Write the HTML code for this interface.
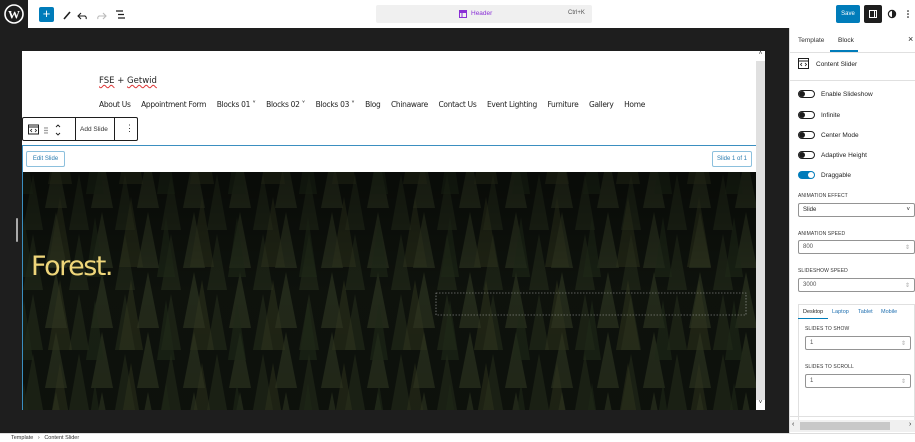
<!DOCTYPE html>
<html><head><meta charset="utf-8"><style>
*{margin:0;padding:0;box-sizing:border-box}
body{width:915px;height:442px;overflow:hidden;font-family:"Liberation Sans",sans-serif;background:#fff;position:relative;color:#1e1e1e}
.abs{position:absolute}
.top{left:0;top:0;width:915px;height:28px;background:#fff}
.wp{left:0;top:0;width:28px;height:28px;background:#1e1e1e}
.canvas{left:0;top:28px;width:789px;height:405px;background:#1e1e1e}
.side{left:789px;top:28px;width:126px;height:405px;background:#fff;border-left:1px solid #ddd;font-size:6.5px}
.frame{left:22px;top:51px;width:743px;height:359px;background:#fff}
.nav span{margin-right:10.5px}
.tog{position:absolute;left:8px;width:17px;height:8px;border:1px solid #1e1e1e;border-radius:5px}
.tog:after{content:"";position:absolute;left:0px;top:0px;width:6px;height:6px;border-radius:50%;background:#1e1e1e}
.tl{position:absolute;left:31px;font-size:6.5px;color:#1e1e1e}
.lab{position:absolute;left:8px;font-size:5px;color:#333;letter-spacing:.1px}
.inp{position:absolute;left:8px;width:117px;height:14px;border:1px solid #949494;font-size:6px;padding:3px 4px;border-radius:2px}
</style></head><body>
<div class="abs top"></div>
<div class="abs wp"><svg width="28" height="28"><circle cx="14" cy="14" r="9" fill="none" stroke="#fff" stroke-width="1.6"/><text x="14" y="18.5" text-anchor="middle" font-family="Liberation Serif" font-weight="bold" font-size="12" fill="#fff">W</text></svg></div>
<div class="abs" style="left:39px;top:7px;width:15px;height:15px;background:#007cba;border-radius:2px;color:#fff;font-size:13px;line-height:14px;text-align:center">+</div>
<svg class="abs" style="left:61px;top:8px" width="70" height="13"><path d="M3 11 L9 4" stroke="#1e1e1e" stroke-width="1.6"/><path d="M20 5 l-3 3 3 3 M17 8 h6 a2 2 0 0 1 2 3" stroke="#1e1e1e" fill="none" stroke-width="1.1"/><path d="M42 5 l3 3 -3 3 M45 8 h-6 a2 2 0 0 0 -2 3" stroke="#bbb" fill="none" stroke-width="1.1"/><path d="M55 3h7 M57 6.5h6 M57 10h7" stroke="#1e1e1e" stroke-width="1.2"/></svg>
<div class="abs" style="left:376px;top:5px;width:216px;height:18px;background:#f0f0f0;border-radius:2px"></div>
<svg class="abs" style="left:459px;top:10px" width="8" height="8"><rect x=".5" y=".5" width="7" height="7" fill="none" stroke="#8a2fd6"/><rect x=".5" y=".5" width="7" height="2.5" fill="#8a2fd6"/><line x1="3" y1="3" x2="3" y2="8" stroke="#8a2fd6"/></svg>
<div class="abs" style="left:471px;top:10px;font-size:6.5px;color:#8a2fd6">Header</div>
<div class="abs" style="left:568px;top:10px;font-size:6px;color:#555">Ctrl+K</div>
<div class="abs" style="left:836px;top:5px;width:24px;height:18px;background:#007cba;color:#fff;font-size:6px;text-align:center;line-height:18px;border-radius:2px">Save</div>
<div class="abs" style="left:864px;top:5px;width:18px;height:18px;background:#1e1e1e;border-radius:2px"><div style="margin:5px;width:8px;height:8px;border:1px solid #fff;position:relative"><div style="position:absolute;right:1px;top:0;width:1.5px;height:6px;background:#fff"></div></div></div>
<svg class="abs" style="left:887px;top:9px" width="28" height="10"><circle cx="5" cy="5" r="3.6" fill="none" stroke="#1e1e1e" stroke-width="1.2"/><path d="M5 1.4 a3.6 3.6 0 0 1 0 7.2z" fill="#1e1e1e"/><circle cx="21" cy="2" r=".8"/><circle cx="21" cy="5" r=".8"/><circle cx="21" cy="8" r=".8"/></svg>

<div class="abs canvas"></div>
<div class="abs" style="left:16px;top:218px;width:2px;height:24px;background:#aaa;border-radius:1px"></div>
<div class="abs frame">
 <div class="abs" style="left:77px;top:25px;font-size:8.5px;color:#222;font-family:'DejaVu Sans',sans-serif"><span style="text-decoration:underline wavy #d33;text-decoration-thickness:1px">FSE</span> + <span style="text-decoration:underline wavy #d33;text-decoration-thickness:1px">Getwid</span></div>
 <div class="abs nav" style="left:77px;top:49px;font-size:7.5px;color:#222;font-family:'DejaVu Sans',sans-serif;white-space:nowrap;letter-spacing:-.3px"><span>About Us</span><span>Appointment Form</span><span>Blocks 01 ˅</span><span>Blocks 02 ˅</span><span>Blocks 03 ˅</span><span>Blog</span><span>Chinaware</span><span>Contact Us</span><span>Event Lighting</span><span>Furniture</span><span>Gallery</span><span>Home</span></div>
 <div class="abs" style="left:0;top:66px;width:116px;height:24px;border:1px solid #1e1e1e;background:#fff;border-radius:2px">
  <div class="abs" style="left:52px;top:-1px;width:1px;height:24px;background:#1e1e1e"></div>
  <div class="abs" style="left:91px;top:-1px;width:1px;height:24px;background:#1e1e1e"></div>
  <svg class="abs" style="left:5px;top:6px" width="40" height="12"><rect x=".5" y="1" width="10" height="9" fill="none" stroke="#1e1e1e"/><line x1=".5" y1="3" x2="10.5" y2="3" stroke="#1e1e1e"/><path d="M4 5 l-1.5 1.5 1.5 1.5 M7 5 l1.5 1.5 -1.5 1.5" stroke="#1e1e1e" fill="none" stroke-width=".8"/><g fill="#666"><circle cx="17" cy="4" r=".7"/><circle cx="19" cy="4" r=".7"/><circle cx="17" cy="6.5" r=".7"/><circle cx="19" cy="6.5" r=".7"/><circle cx="17" cy="9" r=".7"/><circle cx="19" cy="9" r=".7"/></g><path d="M28 3 l2 -2 2 2 M28 9 l2 2 2 -2" stroke="#1e1e1e" fill="none" stroke-width=".9"/></svg>
  <div class="abs" style="left:57px;top:8px;font-size:6.5px;color:#333">Add Slide</div>
  <div class="abs" style="left:102px;top:5px;font-size:9px;color:#333">⋮</div>
 </div>
 <div class="abs" style="left:0;top:94px;width:735px;height:265px;border:1px solid #3b8fc0;border-bottom:none"></div>
 <div class="abs" style="left:4px;top:100px;width:39px;height:16px;border:1px solid #8cc0dd;border-radius:2px;font-size:6px;color:#2b7cb0;text-align:center;line-height:14px">Edit Slide</div>
 <div class="abs" style="left:690px;top:100px;width:40px;height:16px;border:1px solid #8cc0dd;border-radius:2px;font-size:6px;color:#2b7cb0;text-align:center;line-height:14px">Slide 1 of 1</div>
 <svg class="abs" style="left:1px;top:121px" width="733" height="238">
  <defs>
   <pattern id="t" width="46" height="60" patternUnits="userSpaceOnUse">
    <rect width="46" height="60" fill="#11160f"/>
    <path d="M10 2 L20 58 L0 58Z" fill="#222a1a"/>
    <path d="M33 -20 L44 36 L22 36Z" fill="#2b3320"/>
    <path d="M33 40 L44 96 L22 96Z" fill="#2b3320"/>
   </pattern>
   <pattern id="t2" x="17" y="25" width="71" height="83" patternUnits="userSpaceOnUse">
    <path d="M20 0 L32 70 L8 70Z" fill="#3e4426" opacity=".5"/>
    <path d="M55 20 L64 80 L46 80Z" fill="#26331e" opacity=".6"/>
   </pattern>
   <linearGradient id="g" x1="0" y1="0" x2="0" y2="1"><stop offset="0" stop-color="#000" stop-opacity=".5"/><stop offset=".5" stop-color="#000" stop-opacity=".2"/><stop offset="1" stop-color="#000" stop-opacity=".25"/></linearGradient>
  </defs>
  <rect width="733" height="238" fill="url(#t)"/>
  <rect width="733" height="238" fill="url(#t2)"/>
  <rect width="733" height="238" fill="url(#g)"/>
  <rect x="413" y="121" width="310" height="22" fill="none" stroke="#aaa" stroke-dasharray="1.5 1.5" stroke-width=".6"/>
  <text x="8" y="103" font-family="'DejaVu Sans',sans-serif" font-size="27" fill="#efd67a" letter-spacing="-1.5">Forest.</text>
 </svg>
 <div class="abs" style="left:734px;top:0;width:9px;height:359px;background:#e0e0e0"></div>
 <div class="abs" style="left:734px;top:0;width:9px;height:10px;background:#fff;font-size:6px;text-align:center">˄</div>
 <div class="abs" style="left:734px;top:349px;width:9px;height:10px;background:#fff;font-size:6px;text-align:center">˅</div>
</div>

<div class="abs side">
 <div class="abs" style="left:8px;top:9px;color:#333">Template</div>
 <div class="abs" style="left:48px;top:9px;color:#1e1e1e">Block</div>
 <div class="abs" style="left:40px;top:22px;width:28px;height:2px;background:#007cba"></div>
 <div class="abs" style="left:118px;top:6px;font-size:9px">×</div>
 <div class="abs" style="left:0;top:24px;width:126px;height:1px;background:#e0e0e0"></div>
 <svg class="abs" style="left:8px;top:30px" width="12" height="12"><rect x=".5" y=".5" width="10" height="10" fill="none" stroke="#1e1e1e"/><line x1=".5" y1="3" x2="10.5" y2="3" stroke="#1e1e1e"/><path d="M4 5 l-1.5 1.5 1.5 1.5 M7 5 l1.5 1.5 -1.5 1.5" stroke="#1e1e1e" fill="none" stroke-width=".8"/></svg>
 <div class="abs" style="left:26px;top:33px">Content Slider</div>
 <div class="abs" style="left:0;top:52px;width:126px;height:1px;background:#e0e0e0"></div>
 <div class="tog" style="top:62px"></div><div class="tl" style="top:63px">Enable Slideshow</div>
 <div class="tog" style="top:83px"></div><div class="tl" style="top:84px">Infinite</div>
 <div class="tog" style="top:103px"></div><div class="tl" style="top:104px">Center Mode</div>
 <div class="tog" style="top:123px"></div><div class="tl" style="top:124px">Adaptive Height</div>
 <div class="abs" style="left:8px;top:143px;width:17px;height:8px;border-radius:5px;background:#007cba"></div><div class="abs" style="left:18px;top:144px;width:6px;height:6px;border-radius:50%;background:#fff"></div><div class="tl" style="top:144px">Draggable</div>
 <div class="lab" style="top:165px">ANIMATION EFFECT</div>
 <div class="inp" style="top:175px">Slide<span style="float:right">˅</span></div>
 <div class="lab" style="top:203px">ANIMATION SPEED</div>
 <div class="inp" style="top:212px;color:#555">800<span style="float:right;color:#aaa">⇕</span></div>
 <div class="lab" style="top:240px">SLIDESHOW SPEED</div>
 <div class="inp" style="top:250px;color:#555">3000<span style="float:right;color:#aaa">⇕</span></div>
 <div class="abs" style="left:8px;top:276px;width:117px;height:123px;border:1px solid #e0e0e0"></div>
 <div class="abs" style="left:13px;top:281px;font-size:5.5px;color:#1e1e1e">Desktop</div>
 <div class="abs" style="left:8px;top:290px;width:30px;height:1px;background:#007cba"></div>
 <div class="abs" style="left:42px;top:281px;font-size:5.5px;color:#2271b1">Laptop</div>
 <div class="abs" style="left:68px;top:281px;font-size:5.5px;color:#2271b1">Tablet</div>
 <div class="abs" style="left:91px;top:281px;font-size:5.5px;color:#2271b1">Mobile</div>
 <div class="lab" style="left:15px;top:298px">SLIDES TO SHOW</div>
 <div class="inp" style="left:15px;top:308px;width:106px;color:#555">1<span style="float:right;color:#aaa">⇕</span></div>
 <div class="lab" style="left:15px;top:336px">SLIDES TO SCROLL</div>
 <div class="inp" style="left:15px;top:346px;width:106px;color:#555">1<span style="float:right;color:#aaa">⇕</span></div>
 <div class="abs" style="left:0;top:388px;width:126px;height:1px;background:#e0e0e0"></div>
 <div class="abs" style="left:0;top:392px;width:126px;height:12px;background:#f0f0f0"></div>
 <div class="abs" style="left:10px;top:394px;width:90px;height:8px;background:#c8c8c8"></div>
 <div class="abs" style="left:2px;top:393px;font-size:7px">‹</div>
 <div class="abs" style="left:119px;top:393px;font-size:7px">›</div>
</div>
<div class="abs" style="left:0;top:433px;width:915px;height:9px;background:#fff;border-top:1px solid #ddd"></div>
<div class="abs" style="left:11px;top:435px;font-size:5.5px;color:#333">Template &nbsp;&nbsp;›&nbsp;&nbsp; Content Slider</div>
</body></html>
